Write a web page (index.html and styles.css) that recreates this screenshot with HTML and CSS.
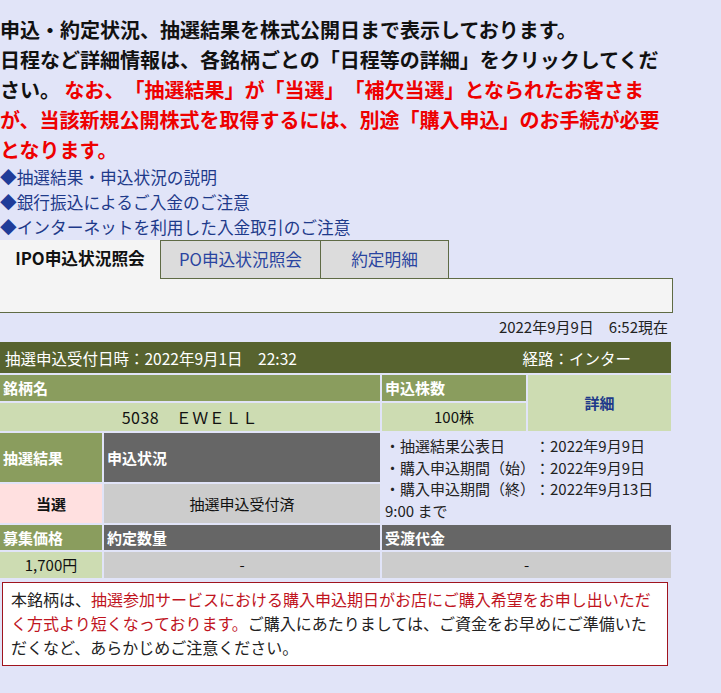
FILE: index.html
```html
<!DOCTYPE html>
<html lang="ja">
<head>
<meta charset="utf-8">
<link rel="stylesheet" href="styles.css">
</head>
<body>
<div class="page">
  <p class="lead">申込・約定状況、抽選結果を株式公開日まで表示しております。<br>日程など詳細情報は、各銘柄ごとの「日程等の詳細」をクリックしてください。 <span class="red">なお、「抽選結果」が「当選」「補欠当選」となられたお客さまが、当該新規公開株式を取得するには、別途「購入申込」のお手続が必要となります。</span></p>
  <ul class="links">
    <li><span class="dia">◆</span>抽選結果・申込状況の説明</li>
    <li><span class="dia">◆</span>銀行振込によるご入金のご注意</li>
    <li><span class="dia">◆</span>インターネットを利用した入金取引のご注意</li>
  </ul>
  <div class="tabs">
    <div class="tab active">IPO申込状況照会</div>
    <div class="tab t2">PO申込状況照会</div>
    <div class="tab t3">約定明細</div>
  </div>
  <div class="panel"></div>
  <div class="asof">2022年9月9日　6:52現在</div>
  <div class="grid">
    <div class="c hd-dark top"><span>抽選申込受付日時：2022年9月1日　22:32</span><span class="route">経路：インター</span></div>
    <div class="c hd-olive span2">銘柄名</div>
    <div class="c hd-olive">申込株数</div>
    <div class="c light detail">詳細</div>
    <div class="c light span2 name">5038　ＥＷＥＬＬ</div>
    <div class="c light center">100株</div>
    <div class="c hd-olive">抽選結果</div>
    <div class="c hd-grey">申込状況</div>
    <div class="c sched">
      <div>・抽選結果公表日　　：2022年9月9日</div>
      <div>・購入申込期間（始）：2022年9月9日</div>
      <div>・購入申込期間（終）：2022年9月13日</div>
      <div>9:00 まで</div>
    </div>
    <div class="c pink">当選</div>
    <div class="c lgrey center">抽選申込受付済</div>
    <div class="c hd-olive">募集価格</div>
    <div class="c hd-grey">約定数量</div>
    <div class="c hd-grey span2r">受渡代金</div>
    <div class="c light center">1,700円</div>
    <div class="c lgrey center">-</div>
    <div class="c lgrey center span2r">-</div>
  </div>
  <div class="notice">本銘柄は、<span class="nred">抽選参加サービスにおける購入申込期日がお店にご購入希望をお申し出いただく方式より短くなっております。</span>ご購入にあたりましては、ご資金をお早めにご準備いただくなど、あらかじめご注意ください。</div>
</div>
</body>
</html>
```

FILE: styles.css
```css
html, body {
  margin: 0;
  padding: 0;
  background: #e1e4f8;
}
body {
  font-family: "Noto Sans CJK JP", "Noto Sans", sans-serif;
  color: #111;
  text-spacing-trim: space-all;
}
.page {
  width: 672px;
  padding-top: 15px;
}
.lead {
  margin: 0;
  font-size: 20px;
  font-weight: bold;
  line-height: 30px;
}
.red { color: #ee0000; }
.links {
  list-style: none;
  margin: 0;
  padding: 0;
  font-size: 16.7px;
  line-height: 25px;
  color: #1e3a8a;
}
.dia { color: #1f3c99; }
.tabs {
  display: flex;
  height: 38px;
}
.tab {
  box-sizing: border-box;
  height: 38px;
  font-size: 16.7px;
  line-height: 36px;
  text-align: center;
  color: #2a45a0;
  background: #dcdcdc;
  border: 1px solid #5f6b45;
  border-bottom: none;
}
.tab.active {
  width: 160px;
  background: #f4f4f4;
  color: #111;
  font-weight: bold;
  border: none;
}
.tab.t2 { width: 161px; }
.tab.t3 { width: 128px; border-left: none; }
.panel {
  box-sizing: border-box;
  height: 35px;
  width: 673px;
  background: #f4f4f4;
  border: 1px solid #5f6b45;
  border-left: none;
  border-top: none;
  position: relative;
}
.panel::before {
  content: "";
  position: absolute;
  left: 160px;
  right: 0;
  top: 0;
  border-top: 1px solid #5f6b45;
}
.asof {
  font-size: 15px;
  line-height: 28px;
  text-align: right;
  padding-right: 4px;
  color: #222;
}
.grid {
  display: grid;
  width: 671px;
  grid-template-columns: 102px 276px 144px 143px;
  grid-template-rows: 31px 26px 28px 49px 39px 25px 26px;
  gap: 2px;
  margin-top: 1px;
  font-size: 15px;
  line-height: 20px;
}
.c {
  display: flex;
  align-items: center;
  padding: 0 3px;
  box-sizing: border-box;
}
.top {
  grid-column: 1 / 5;
  background: #57632f;
  color: #fff;
  font-size: 15.5px;
  justify-content: space-between;
  padding: 0 40px 0 5px;
}
.hd-olive {
  background: #8a9d5e;
  color: #fff;
  font-weight: bold;
}
.hd-grey {
  background: #666666;
  color: #fff;
  font-weight: bold;
}
.span2 { grid-column: span 2; }
.span2r { grid-column: 3 / 5; }
.light { background: #cddcb2; }
.lgrey { background: #cccccc; }
.center { justify-content: center; }
.detail {
  grid-column: 4;
  grid-row: 2 / 4;
  justify-content: center;
  color: #1e3a8a;
  font-weight: bold;
}
.name {
  justify-content: center;
  font-size: 16px;
  letter-spacing: 0.5px;
}
.sched {
  grid-column: 3 / 5;
  grid-row: 4 / 6;
  display: block;
  padding: 2px 3px 0;
  line-height: 21.7px;
  color: #222;
}
.pink {
  background: #ffe0e0;
  justify-content: center;
  font-weight: bold;
}
.notice {
  box-sizing: border-box;
  width: 666px;
  margin: 4px 0 0 2px;
  padding: 4px 8px 6px;
  background: #fff;
  border: 1px solid #a0141e;
  font-size: 16px;
  line-height: 24px;
  color: #222;
}
.nred { color: #c0141e; }
```
